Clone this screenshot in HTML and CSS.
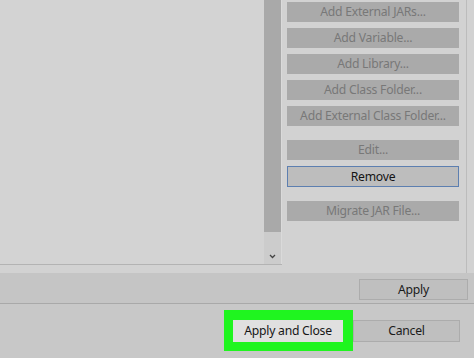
FILE: index.html
```html
<!DOCTYPE html>
<html lang="en">
<head>
    <meta charset="UTF-8">
    <meta name="viewport" content="width=device-width, initial-scale=1.0">
    <title>Java Build Path</title>
    <link rel="stylesheet" href="styles.css">
</head>
<body>
    <div class="main">
        <div class="list-wrap">
            <div class="list"></div>
            <div class="scrollbar">
                <div class="thumb"></div>
                <div class="track">
                    <svg class="chevron" width="7" height="5" viewBox="0 0 7 5">
                        <polyline points="1,1 3.5,3.5 6,1" fill="none" stroke="#444" stroke-width="1.3"/>
                    </svg>
                </div>
            </div>
        </div>

        <div class="actions">
            <button class="btn disabled">Add External JARs...</button>
            <button class="btn disabled">Add Variable...</button>
            <button class="btn disabled">Add Library...</button>
            <button class="btn disabled">Add Class Folder...</button>
            <button class="btn disabled">Add External Class Folder...</button>
            <button class="btn disabled group">Edit...</button>
            <button class="btn focused">Remove</button>
            <button class="btn disabled group">Migrate JAR File...</button>
        </div>

        <div class="edge"></div>
    </div>

    <div class="apply-bar">
        <button class="btn plain apply">Apply</button>
    </div>

    <div class="footer">
        <div class="highlight">
            <button class="btn primary">Apply and Close</button>
        </div>
        <button class="btn plain cancel">Cancel</button>
    </div>
</body>
</html>
```

FILE: styles.css
```css
* {
    box-sizing: border-box;
    font-family: "Noto Sans", "Liberation Sans", sans-serif;
}

body {
    margin: 0;
    width: 474px;
    height: 358px;
    overflow: hidden;
    background: #c8c8c8;
}

.main {
    display: flex;
    height: 273px;
    background: #d2d2d2;
}

.list-wrap {
    display: flex;
    height: 265px;
    border-bottom: 1px solid #b3b3b3;
}

.list {
    width: 264px;
    background: #d3d3d3;
}

.scrollbar {
    width: 18px;
    display: flex;
    flex-direction: column;
    border-right: 1px solid #dadada;
}

.thumb {
    height: 232px;
    background: #a9a9a9;
}

.track {
    flex: 1;
    background: #cccccc;
    display: flex;
    justify-content: center;
    padding-top: 22px;
}

.chevron {
    display: block;
}

.actions {
    display: flex;
    flex-direction: column;
    gap: 6px;
    width: 172px;
    margin-left: 5px;
    padding-top: 2px;
}

.btn {
    height: 20px;
    padding: 0;
    border: none;
    font-size: 12.2px;
    letter-spacing: -0.25px;
    line-height: 20px;
    text-align: center;
    white-space: nowrap;
}

.disabled {
    background: #aaaaaa;
    color: #787878;
}

.group {
    margin-top: 8px;
}

.focused {
    height: 21px;
    line-height: 19px;
    background: #bdbdbd;
    border: 1px solid #5d7fb0;
    color: #141414;
}

.edge {
    width: 8px;
    border-right: 1px solid #bcbcbc;
}

.apply-bar {
    height: 31px;
    display: flex;
    justify-content: flex-end;
    padding: 6px 6px 0 0;
    background: #c5c5c5;
    border-bottom: 1px solid #a9a9a9;
}

.plain {
    background: #bfbfbf;
    border: 1px solid #acacac;
    color: #1a1a1a;
}

.apply {
    width: 109px;
    height: 21px;
    line-height: 19px;
}

.footer {
    display: flex;
    align-items: flex-start;
    padding: 6px 0 0 224px;
}

.highlight {
    display: flex;
    padding: 10px 10px 9px 9px;
    background: #1ff51f;
}

.primary {
    width: 110px;
    height: 22px;
    line-height: 22px;
    background: #e0e0e0;
    color: #161616;
}

.cancel {
    width: 107px;
    height: 22px;
    line-height: 20px;
    margin-top: 10px;
}
```
